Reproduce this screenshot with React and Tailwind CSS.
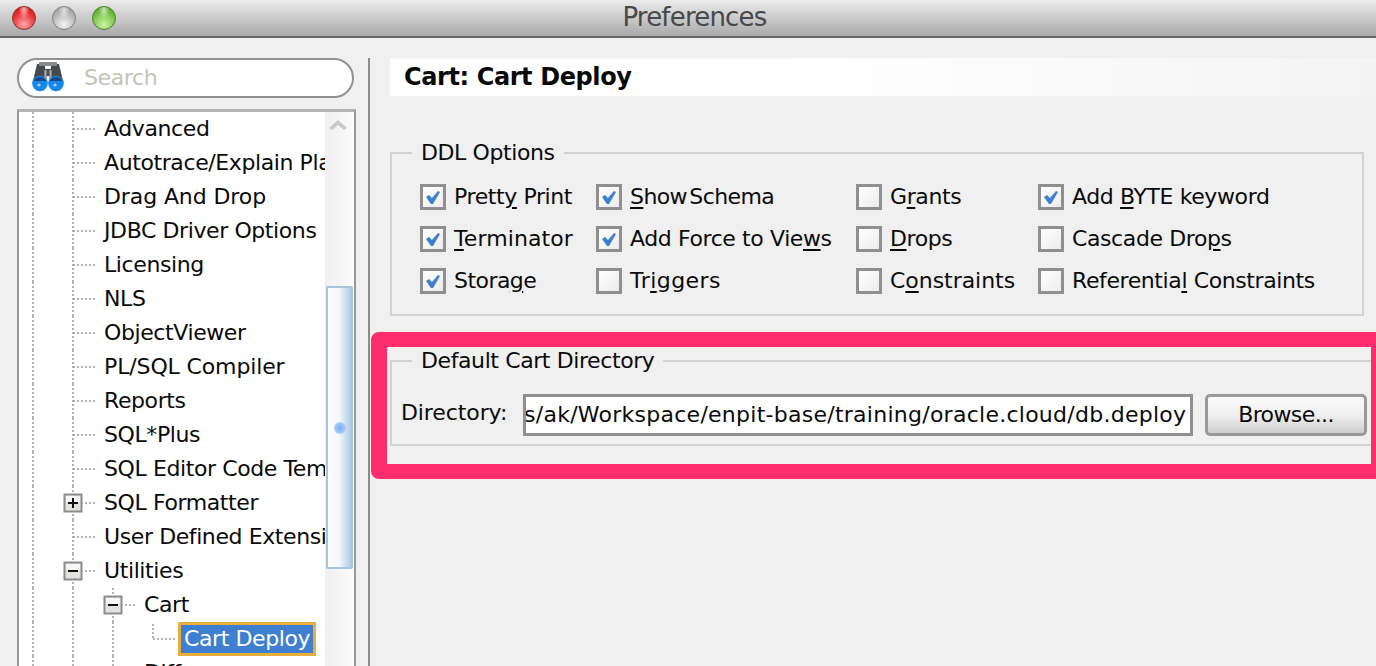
import React from "react";

const rows = [
  { label: "Advanced", depth: 2 },
  { label: "Autotrace/Explain Plan", depth: 2 },
  { label: "Drag And Drop", depth: 2, cls: "tracking-[-0.1px]" },
  { label: "JDBC Driver Options", depth: 2 },
  { label: "Licensing", depth: 2 },
  { label: "NLS", depth: 2 },
  { label: "ObjectViewer", depth: 2 },
  { label: "PL/SQL Compiler", depth: 2, cls: "tracking-[-0.13px]" },
  { label: "Reports", depth: 2 },
  { label: "SQL*Plus", depth: 2 },
  { label: "SQL Editor Code Templates", depth: 2 },
  { label: "SQL Formatter", depth: 2, toggle: "plus" },
  { label: "User Defined Extensions", depth: 2 },
  { label: "Utilities", depth: 2, toggle: "minus" },
  { label: "Cart", depth: 3, toggle: "minus" },
  { label: "Cart Deploy", depth: 4, selected: true },
  { label: "Diff", depth: 3 },
];

const Expander = ({ x, kind }) => (
  <g>
    <rect x={x - 8.5} y={8.5} width={17} height={17} fill="#e2e2de" stroke="#8c8c8c" strokeWidth="2" />
    <rect x={x - 7} y={10} width={14} height={6} fill="#f6f6f4" />
    <rect x={x - 5} y={16} width={10} height={2} fill="#111" />
    {kind === "plus" && <rect x={x - 1} y={12} width={2} height={10} fill="#111" />}
  </g>
);

const Dots = (props) => <line stroke="#9a9a9a" strokeWidth="1.5" strokeDasharray="2 2" {...props} />;

// guide lines + expander of one row, x values are page x minus 19
const Connector = ({ row, index }) => {
  const width = row.depth === 2 ? 85 : row.depth === 3 ? 125 : 159;
  const afterUtilities = index > 13;
  return (
    <svg width={width} height="34" className="shrink-0">
      <Dots x1="14" y1="0" x2="14" y2="34" />
      <Dots x1="54" y1="0" x2="54" y2="34" />
      {row.depth === 2 && <Dots x1="54" y1="17" x2="77" y2="17" />}
      {afterUtilities && <Dots x1="94" y1="0" x2="94" y2="34" />}
      {row.depth === 3 && <Dots x1="94" y1="17" x2="117" y2="17" />}
      {row.depth === 4 && <Dots x1="134" y1="2" x2="134" y2="17" />}
      {row.depth === 4 && <Dots x1="134" y1="17" x2="157" y2="17" />}
      {row.toggle && <Expander x={row.depth === 2 ? 54 : 94} kind={row.toggle} />}
    </svg>
  );
};

const TreeRow = ({ row, index }) => (
  <div className="flex h-[34px] items-center whitespace-nowrap">
    <Connector row={row} index={index} />
    {row.selected ? (
      <span className="flex h-[34px] w-[138px] items-center border-[3px] border-[#e8ae3a] bg-[#3e7fd2] pl-[3px] text-white">
        {row.label}
      </span>
    ) : (
      <span className={row.cls}>{row.label}</span>
    )}
  </div>
);

const Binoculars = () => (
  <svg width="32" height="31" viewBox="0 0 32 31" className="mb-[3px] shrink-0">
    <path d="M5 3h8v5h6V3h8l4 17H18l-1-5h-2l-1 5H1z" fill="#45484d" />
    <rect x="7" y="1" width="18" height="4" rx="1" fill="#85888c" />
    <path d="M12.5 9h2v8h-2zM17.5 9h2v8h-2z" fill="#b4b4b4" />
    <circle cx="8" cy="22.5" r="7.8" fill="#1586ea" />
    <circle cx="24" cy="22.5" r="7.8" fill="#1586ea" />
    <path d="M2 20a6.5 6.5 0 0 1 12 0zM18 20a6.5 6.5 0 0 1 12 0z" fill="#16477e" />
    <circle cx="7" cy="24" r="1.6" fill="#9fd4ff" />
    <circle cx="23" cy="24" r="1.6" fill="#9fd4ff" />
  </svg>
);

const Checkbox = ({ checked, cls, children }) => (
  <div className="flex h-[42px] items-center whitespace-nowrap">
    <span className="flex h-[26px] w-[26px] shrink-0 items-center justify-center border-[3px] border-[#8f8f8f] bg-gradient-to-br from-white to-[#ececec]">
      {checked && (
        <svg width="16" height="16" viewBox="0 0 16 16">
          <path d="M1 8l3-2 3 3 6-7 2 1-7 12h-2z" fill="#3f7fcf" />
        </svg>
      )}
    </span>
    <span className={`ml-[8px] ${cls || ""}`}>{children}</span>
  </div>
);

const Mn = ({ children }) => <u className="decoration-2 underline-offset-[3px]">{children}</u>;

export default function App() {
  return (
    <div className="flex h-[666px] w-[1376px] flex-col overflow-hidden bg-[#f0f0f0] font-['DejaVu_Sans',sans-serif] text-[22px] leading-[28px] tracking-[-0.4px] text-[#0a0a0a]">
      <div className="relative flex h-[38px] shrink-0 items-center border-b-[2px] border-[#666] bg-gradient-to-b from-[#ececec] to-[#a9a9a9]">
        <div className="ml-[12px] flex gap-[16px]">
          <span className="h-[24px] w-[24px] rounded-full border border-[#8a2b2b] bg-[radial-gradient(ellipse_at_50%_12%,rgba(255,255,255,0.65),transparent_35%),radial-gradient(circle_at_50%_80%,#ffa8a8,#e82c2c_60%,#c81818)]" />
          <span className="h-[24px] w-[24px] rounded-full border border-[#808080] bg-[radial-gradient(ellipse_at_50%_12%,rgba(255,255,255,0.65),transparent_35%),radial-gradient(circle_at_50%_80%,#f4f4f4,#b4b4b4_60%,#909090)]" />
          <span className="h-[24px] w-[24px] rounded-full border border-[#4d7f2a] bg-[radial-gradient(ellipse_at_50%_12%,rgba(255,255,255,0.65),transparent_35%),radial-gradient(circle_at_50%_80%,#ccf4a4,#72c040_60%,#4f9a28)]" />
        </div>
        <span className="absolute left-[13px] right-0 top-0 text-center text-[26px] leading-[34px] tracking-[-0.8px] text-[#484848]">Preferences</span>
      </div>

      <div className="flex min-h-0 flex-1">
        <div className="flex w-[356px] shrink-0 flex-col pl-[17px] pt-[20px]">
          <div className="mr-[2px] flex h-[40px] items-center rounded-full border-2 border-[#919191] bg-white pl-[13px]">
            <Binoculars />
            <span className="ml-[20px] text-[#c4c4b8]">Search</span>
          </div>
          <div className="mt-[11px] flex min-h-0 flex-1 border-x-2 border-t-[3px] border-[#999] border-t-[#b4b4b4] bg-white">
            <div className="min-w-0 flex-1 overflow-hidden">
              {rows.map((row, i) => (
                <TreeRow key={row.label} row={row} index={i} />
              ))}
            </div>
            <div className="flex w-[29px] shrink-0 flex-col bg-gradient-to-r from-[#f0f0f0] to-[#fbfbfb] pt-[4px]">
              <svg width="20" height="14" viewBox="0 0 20 14" className="ml-[3px] mt-[2px]">
                <path d="M1 10l9-8 9 8-3 2-6-5-6 5z" fill="#c8c8c8" />
              </svg>
              <div className="ml-px mt-[154px] flex h-[283px] w-[27px] items-center justify-center rounded-[2px] border-2 border-[#a9c5de] bg-gradient-to-r from-white via-[#f2f6fb] to-[#aecbe4]">
                <span className="h-[12px] w-[12px] rounded-full bg-[radial-gradient(circle,#7aaef0,#c4dcf8)]" />
              </div>
            </div>
          </div>
        </div>

        <div className="ml-[12px] mt-[20px] flex min-w-0 flex-1 flex-col border-l-[2px] border-[#8c8c8c]">
          <div className="ml-[20px] flex h-[38px] shrink-0 items-center bg-gradient-to-r from-white from-40% to-[#f4f4f4] pl-[14px] text-[24px] font-bold">
            Cart: Cart Deploy
          </div>

          <fieldset className="ml-[20px] mr-[12px] mt-[43px] h-[177px] border-2 border-[#d2d2d2] pt-[9px]">
            <legend className="ml-[20px] px-[9px]">DDL Options</legend>
            <div className="grid grid-cols-[176px_260px_182px_1fr] pl-[28px]">
              <Checkbox checked>Prett<Mn>y</Mn> Print</Checkbox>
              <Checkbox checked cls="tracking-[-0.6px] [word-spacing:-4px]"><Mn>S</Mn>how Schema</Checkbox>
              <Checkbox>G<Mn>r</Mn>ants</Checkbox>
              <Checkbox checked>Add <Mn>B</Mn>YTE keyword</Checkbox>
              <Checkbox checked cls="tracking-[0.1px]"><Mn>T</Mn>erminator</Checkbox>
              <Checkbox checked>Add Force to Vie<Mn>w</Mn>s</Checkbox>
              <Checkbox><Mn>D</Mn>rops</Checkbox>
              <Checkbox>Cascade Dro<Mn>p</Mn>s</Checkbox>
              <Checkbox checked cls="tracking-[-0.55px]">Stora<Mn>g</Mn>e</Checkbox>
              <Checkbox cls="tracking-[0.45px]">Tr<Mn>i</Mn>ggers</Checkbox>
              <Checkbox cls="tracking-[-0.04px]">C<Mn>o</Mn>nstraints</Checkbox>
              <Checkbox>Referentia<Mn>l</Mn> Constraints</Checkbox>
            </div>
          </fieldset>

          <div className="ml-px mt-[16px] h-[147px] shrink-0 rounded-l-[8px] border-y-[15px] border-l-[16px] border-r-[5px] border-[#ff2d6b]">
            <fieldset className="ml-[3px] h-[99px] border-2 border-r-0 border-[#d2d2d2]">
              <legend className="ml-[20px] px-[9px]">Default Cart Directory</legend>
              <div className="mt-[19px] flex items-center pl-[9px]">
                <span className="mb-[4px] w-[122px] shrink-0 tracking-[-0.1px]">Directory:</span>
                <div className="flex h-[42px] w-[670px] items-center overflow-hidden whitespace-nowrap border-[3px] border-[#8f8f8f] bg-white tracking-[0.26px]">
                  <span className="-ml-[2px]">s/ak/Workspace/enpit-base/training/oracle.cloud/db.deploy</span>
                </div>
                <button className="ml-[12px] h-[42px] w-[162px] rounded-[5px] border-[3px] border-[#999] bg-gradient-to-b from-[#fbfbfb] via-[#f0f0f0] to-[#cfcfcf] tracking-[-0.6px]">
                  Browse...
                </button>
              </div>
            </fieldset>
          </div>
        </div>
      </div>
    </div>
  );
}
